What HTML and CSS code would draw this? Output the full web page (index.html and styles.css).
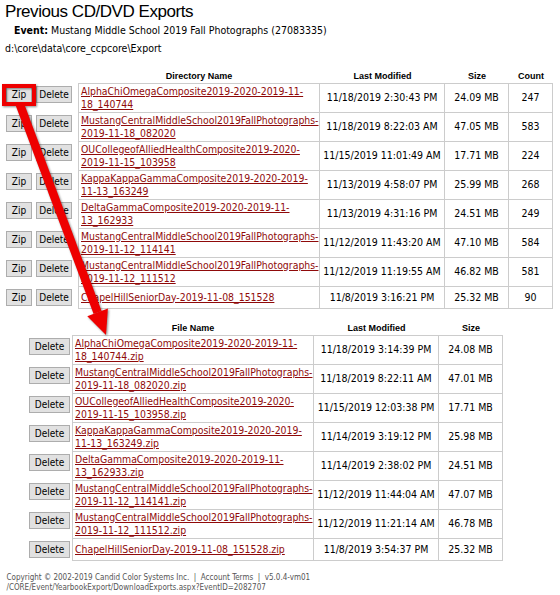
FILE: index.html
```html
<!DOCTYPE html>
<html>
<head>
<meta charset="utf-8">
<title>Previous CD/DVD Exports</title>
<link rel="stylesheet" href="styles.css">
</head>
<body>
<div class="page">
  <h1 class="title">Previous CD/DVD Exports</h1>
  <div class="event"><b>Event:</b> Mustang Middle School 2019 Fall Photographs (27083335)</div>
  <div class="path">d:\core\data\core_ccpcore\Export</div>

  <table class="grid dirs">
    <thead>
      <tr><th class="w-zip"></th><th class="w-del"></th><th class="w-name">Directory Name</th><th class="w-date">Last Modified</th><th class="w-size">Size</th><th class="w-count">Count</th></tr>
    </thead>
    <tbody>
      <tr><td class="btn"><button class="b-zip">Zip</button></td><td class="btn"><button class="b-del">Delete</button></td><td class="name"><a href="#">AlphaChiOmegaComposite2019-2020-2019-11-<br>18_140744</a></td><td>11/18/2019 2:30:43 PM</td><td>24.09 MB</td><td>247</td></tr>
      <tr><td class="btn"><button class="b-zip">Zip</button></td><td class="btn"><button class="b-del">Delete</button></td><td class="name"><a href="#">MustangCentralMiddleSchool2019FallPhotographs-<br>2019-11-18_082020</a></td><td>11/18/2019 8:22:03 AM</td><td>47.05 MB</td><td>583</td></tr>
      <tr><td class="btn"><button class="b-zip">Zip</button></td><td class="btn"><button class="b-del">Delete</button></td><td class="name"><a href="#">OUCollegeofAlliedHealthComposite2019-2020-<br>2019-11-15_103958</a></td><td>11/15/2019 11:01:49 AM</td><td>17.71 MB</td><td>224</td></tr>
      <tr><td class="btn"><button class="b-zip">Zip</button></td><td class="btn"><button class="b-del">Delete</button></td><td class="name"><a href="#">KappaKappaGammaComposite2019-2020-2019-<br>11-13_163249</a></td><td>11/13/2019 4:58:07 PM</td><td>25.99 MB</td><td>268</td></tr>
      <tr><td class="btn"><button class="b-zip">Zip</button></td><td class="btn"><button class="b-del">Delete</button></td><td class="name"><a href="#">DeltaGammaComposite2019-2020-2019-11-<br>13_162933</a></td><td>11/13/2019 4:31:16 PM</td><td>24.51 MB</td><td>249</td></tr>
      <tr><td class="btn"><button class="b-zip">Zip</button></td><td class="btn"><button class="b-del">Delete</button></td><td class="name"><a href="#">MustangCentralMiddleSchool2019FallPhotographs-<br>2019-11-12_114141</a></td><td>11/12/2019 11:43:20 AM</td><td>47.10 MB</td><td>584</td></tr>
      <tr><td class="btn"><button class="b-zip">Zip</button></td><td class="btn"><button class="b-del">Delete</button></td><td class="name"><a href="#">MustangCentralMiddleSchool2019FallPhotographs-<br>2019-11-12_111512</a></td><td>11/12/2019 11:19:55 AM</td><td>46.82 MB</td><td>581</td></tr>
      <tr><td class="btn"><button class="b-zip">Zip</button></td><td class="btn"><button class="b-del">Delete</button></td><td class="name"><a href="#">ChapelHillSeniorDay-2019-11-08_151528</a></td><td>11/8/2019 3:16:21 PM</td><td>25.32 MB</td><td>90</td></tr>
    </tbody>
  </table>

  <table class="grid files">
    <thead>
      <tr><th class="w-del2"></th><th class="w-name">File Name</th><th class="w-date">Last Modified</th><th class="w-size">Size</th></tr>
    </thead>
    <tbody>
      <tr><td class="btn"><button class="b-del2">Delete</button></td><td class="name"><a href="#">AlphaChiOmegaComposite2019-2020-2019-11-<br>18_140744.zip</a></td><td>11/18/2019 3:14:39 PM</td><td>24.08 MB</td></tr>
      <tr><td class="btn"><button class="b-del2">Delete</button></td><td class="name"><a href="#">MustangCentralMiddleSchool2019FallPhotographs-<br>2019-11-18_082020.zip</a></td><td>11/18/2019 8:22:11 AM</td><td>47.01 MB</td></tr>
      <tr><td class="btn"><button class="b-del2">Delete</button></td><td class="name"><a href="#">OUCollegeofAlliedHealthComposite2019-2020-<br>2019-11-15_103958.zip</a></td><td>11/15/2019 12:03:38 PM</td><td>17.71 MB</td></tr>
      <tr><td class="btn"><button class="b-del2">Delete</button></td><td class="name"><a href="#">KappaKappaGammaComposite2019-2020-2019-<br>11-13_163249.zip</a></td><td>11/14/2019 3:19:12 PM</td><td>25.98 MB</td></tr>
      <tr><td class="btn"><button class="b-del2">Delete</button></td><td class="name"><a href="#">DeltaGammaComposite2019-2020-2019-11-<br>13_162933.zip</a></td><td>11/14/2019 2:38:02 PM</td><td>24.51 MB</td></tr>
      <tr><td class="btn"><button class="b-del2">Delete</button></td><td class="name"><a href="#">MustangCentralMiddleSchool2019FallPhotographs-<br>2019-11-12_114141.zip</a></td><td>11/12/2019 11:44:04 AM</td><td>47.07 MB</td></tr>
      <tr><td class="btn"><button class="b-del2">Delete</button></td><td class="name"><a href="#">MustangCentralMiddleSchool2019FallPhotographs-<br>2019-11-12_111512.zip</a></td><td>11/12/2019 11:21:14 AM</td><td>46.78 MB</td></tr>
      <tr><td class="btn"><button class="b-del2">Delete</button></td><td class="name"><a href="#">ChapelHillSeniorDay-2019-11-08_151528.zip</a></td><td>11/8/2019 3:54:37 PM</td><td>25.32 MB</td></tr>
    </tbody>
  </table>

  <div class="footer">
    <div>Copyright © 2002-2019 Candid Color Systems Inc. &nbsp;|&nbsp; Account Terms &nbsp;|&nbsp; v5.0.4-vm01</div>
    <div>/CORE/Event/YearbookExport/DownloadExports.aspx?EventID=2082707</div>
  </div>

  <svg class="annot" width="560" height="595" viewBox="0 0 560 595">
    <g class="annot-shape">
      <rect x="4" y="86" width="30" height="18" fill="none" stroke="#ee0000" stroke-width="4"/>
      <line x1="19.7" y1="104" x2="97.6" y2="312.5" stroke="#ee0000" stroke-width="8.5"/>
      <polygon points="106,335 107.9,308.6 87.3,316.3" fill="#ee0000"/>
    </g>
  </svg>
</div>
</body>
</html>
```

FILE: styles.css
```css
* { box-sizing: border-box; }

html, body {
  margin: 0;
  padding: 0;
  background: #ffffff;
}

body {
  font-family: "DejaVu Sans Condensed", "DejaVu Sans", sans-serif;
  font-size: 10.5px;
  line-height: 13px;
  color: #000000;
}

.page {
  position: relative;
  width: 560px;
  height: 595px;
  padding: 1.5px 0 0 5px;
  overflow: hidden;
}

.title {
  margin: 0;
  font-family: "Liberation Sans", Arial, sans-serif;
  font-weight: normal;
  font-size: 17px;
  letter-spacing: -0.45px;
  line-height: 20px;
  color: #000000;
}

.event {
  margin: 2px 0 0 9px;
}

.path {
  margin-top: 5px;
}

.grid {
  border-collapse: separate;
  border-spacing: 0;
  table-layout: fixed;
}

.dirs {
  width: 549px;
  margin: 15px 0 0 -1px;
}

.files {
  width: 476px;
  margin: 13px 0 0 22px;
}

.grid th {
  padding: 0;
  height: 13px;
  font-family: "Liberation Sans", Arial, sans-serif;
  font-size: 9px;
  font-weight: bold;
  text-align: center;
  white-space: nowrap;
}

.w-zip { width: 30px; }
.w-del { width: 44px; }
.w-del2 { width: 45px; }
.w-name { width: 242px; }
.w-date { width: 125px; }
.w-size { width: 64px; }
.w-count { width: 44px; }

.grid td {
  padding: 1px 2px;
  text-align: center;
  vertical-align: middle;
  white-space: nowrap;
  border-right: 1px solid #cccccc;
  border-bottom: 1px solid #cccccc;
}

.grid tbody tr:first-child td {
  border-top: 1px solid #cccccc;
}

.grid td.name {
  text-align: left;
  border-left: 1px solid #cccccc;
  padding-left: 2px;
  overflow: hidden;
}

.grid td.btn {
  vertical-align: top;
  text-align: left;
  padding: 2px 0 3px 2px;
  border: none;
}

.grid tbody tr:first-child td.btn {
  border-top: 1px solid transparent;
}

.grid a {
  font-size: 10.4px;
  color: #8f0a0a;
  text-decoration: underline;
}

button {
  display: block;
  height: 17px;
  padding: 0;
  margin: 0;
  font-family: "DejaVu Sans Condensed", "DejaVu Sans", sans-serif;
  font-size: 10px;
  line-height: 15px;
  color: #000000;
  background: #e1e1e1;
  border: 1px solid #adadad;
  border-radius: 0;
  text-align: center;
}

.b-zip { width: 26px; }
.b-del { width: 36px; }
.b-del2 { width: 41px; }

.footer {
  margin: 12px 0 0 1.5px;
  font-size: 8px;
  line-height: 10px;
  color: #555555;
}

.annot {
  position: absolute;
  left: 0;
  top: 0;
  pointer-events: none;
}

.annot-shape {
  filter: drop-shadow(1px 1px 1px rgba(0, 0, 0, 0.45));
}
```
